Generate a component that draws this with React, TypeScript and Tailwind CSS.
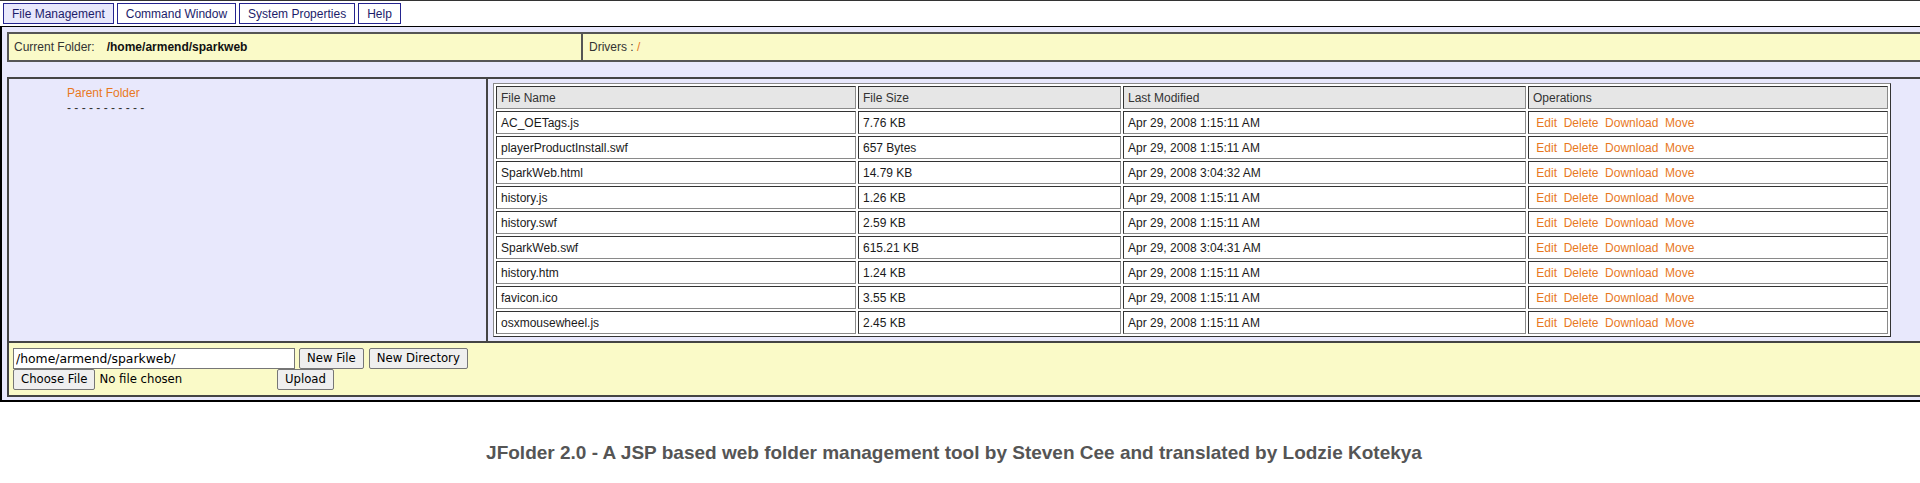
const files = [
  { name: "AC_OETags.js", size: "7.76 KB", modified: "Apr 29, 2008 1:15:11 AM" },
  { name: "playerProductInstall.swf", size: "657 Bytes", modified: "Apr 29, 2008 1:15:11 AM" },
  { name: "SparkWeb.html", size: "14.79 KB", modified: "Apr 29, 2008 3:04:32 AM" },
  { name: "history.js", size: "1.26 KB", modified: "Apr 29, 2008 1:15:11 AM" },
  { name: "history.swf", size: "2.59 KB", modified: "Apr 29, 2008 1:15:11 AM" },
  { name: "SparkWeb.swf", size: "615.21 KB", modified: "Apr 29, 2008 3:04:31 AM" },
  { name: "history.htm", size: "1.24 KB", modified: "Apr 29, 2008 1:15:11 AM" },
  { name: "favicon.ico", size: "3.55 KB", modified: "Apr 29, 2008 1:15:11 AM" },
  { name: "osxmousewheel.js", size: "2.45 KB", modified: "Apr 29, 2008 1:15:11 AM" },
];

const tabs = ["File Management", "Command Window", "System Properties", "Help"];

const cell =
  "h-[23px] px-[4px] py-0 text-left font-normal leading-[14px] border border-t-[#333] border-l-[#333] border-b-[#8a8a8a] border-r-[#8a8a8a]";

const btn =
  "h-[21px] px-[7px] border border-[#767676] rounded-[2px] bg-[#efefef] text-black font-['DejaVu_Sans',sans-serif] text-[11.7px] leading-[19px]";

export default function App() {
  return (
    <div className="w-[1920px] h-[483px] overflow-hidden bg-white border-t border-[#333] font-['Liberation_Sans',Arial,sans-serif] text-[12px] text-[#333]">
      {/* tabs */}
      <div className="flex gap-[3px] px-[3px] pt-[2px] pb-[2px]">
        {tabs.map((t, i) => (
          <div
            key={t}
            className={
              "h-[21px] px-[8px] flex items-center border border-[#24248f] text-[#1c1c6a] " +
              (i === 0 ? "bg-[#e8e8fc]" : "bg-white")
            }
          >
            {t}
          </div>
        ))}
      </div>

      <div className="w-[1940px] border-t border-l-2 border-b-2 border-black bg-[#e8e8fc] pl-[5px] pt-[5px] pb-[3px]">
        {/* current folder */}
        <div className="flex h-[30px] border-2 border-r-0 border-[#555] bg-[#fafac8]">
          <div className="w-[574px] flex items-center border-r-2 border-[#555] pl-[5px]">
            <span>Current Folder:</span>
            <span className="ml-[12px] font-bold text-[#111]">/home/armend/sparkweb</span>
          </div>
          <div className="flex items-center pl-[6px]">
            <span>Drivers :&nbsp;</span>
            <span className="text-[#e8781e]">/</span>
          </div>
        </div>

        {/* main panel */}
        <div className="mt-[15px] flex border-2 border-r-0 border-b-0 border-[#444]">
          <div className="w-[479px] shrink-0 border-r-2 border-[#444] pl-[58px] pt-[7px] leading-[15px]">
            <div className="text-[#e8781e]">Parent Folder</div>
            <div className="text-[#333]">- - - - - - - - - - -</div>
          </div>
          <div className="pl-[5px] pt-[4px] pb-[4px]">
            <table className="w-[1398px] table-fixed border-separate border-spacing-[2px] bg-white border border-t-[#8a8a8a] border-l-[#8a8a8a] border-b-[#333] border-r-[#333]">
              <thead>
                <tr className="bg-[#e6e6e6]">
                  <th className={cell + " w-[360px]"}>File Name</th>
                  <th className={cell + " w-[263px]"}>File Size</th>
                  <th className={cell + " w-[403px]"}>Last Modified</th>
                  <th className={cell + " w-[360px]"}>Operations</th>
                </tr>
              </thead>
              <tbody className="text-[#1a1a1a]">
                {files.map((f) => (
                  <tr key={f.name}>
                    <td className={cell}>{f.name}</td>
                    <td className={cell}>{f.size}</td>
                    <td className={cell}>{f.modified}</td>
                    <td className={cell + " whitespace-pre text-[#e8781e]"}>
                      {" "}
                      <a>Edit</a>
                      {"  "}
                      <a>Delete</a>
                      {"  "}
                      <a>Download</a>
                      {"  "}
                      <a>Move</a>
                    </td>
                  </tr>
                ))}
              </tbody>
            </table>
          </div>
        </div>

        {/* bottom form */}
        <div className="border-2 border-r-0 border-[#444] bg-[#fafac8] px-[4px] py-[5px]">
          <div className="flex items-center">
            <input
              readOnly
              defaultValue="/home/armend/sparkweb/"
              className="w-[282px] h-[21px] px-[2px] border border-[#767676] bg-white text-black font-['DejaVu_Sans',sans-serif] text-[12.4px] outline-none"
            />
            <button className={btn + " ml-[4px]"}>New File</button>
            <button className={btn + " ml-[5px]"}>New Directory</button>
          </div>
          <div className="flex items-center h-[21px]">
            <div className="w-[264px] flex items-center">
              <button className={btn + " h-[19px] leading-[17px] px-[6px]"}>Choose File</button>
              <span className="ml-[4px] text-black font-['DejaVu_Sans',sans-serif] text-[11.7px]">
                No file chosen
              </span>
            </div>
            <button className={btn}>Upload</button>
          </div>
        </div>
      </div>

      <div className="mt-[41px] pr-[12px] text-center font-bold text-[19px] leading-[20px] text-[#555]">
        JFolder 2.0 - A JSP based web folder management tool by Steven Cee and translated by Lodzie Kotekya
      </div>
    </div>
  );
}
